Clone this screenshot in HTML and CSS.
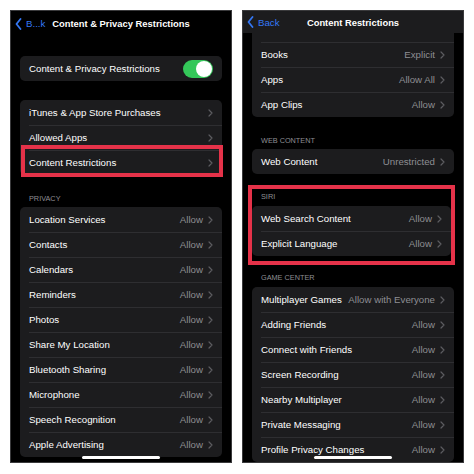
FILE: index.html
```html
<!DOCTYPE html>
<html lang="en">
<head>
  <meta charset="UTF-8">
  <meta name="viewport" content="width=device-width, initial-scale=1.0">
  <title>Content Restrictions</title>
  <link rel="stylesheet" href="styles.css">
</head>
<body>
  <div class="page">
    <!-- left screen -->
    <div class="phone">
      <div class="nav">
        <div class="back">
          <svg width="7" height="12" viewBox="0 0 7 12"><polyline points="5.5,1 1.5,6 5.5,11"/></svg>
          <span>B...k</span>
        </div>
        <div class="title">Content &amp; Privacy Restrictions</div>
        <div></div>
      </div>

      <div class="group first">
        <div class="row">
          <span class="label">Content &amp; Privacy Restrictions</span>
          <span class="toggle"><span class="knob"></span></span>
        </div>
      </div>

      <div class="group second">
        <div class="row"><span class="label">iTunes &amp; App Store Purchases</span><svg class="chev" width="5" height="8" viewBox="0 0 5 8"><polyline points="1,1 4,4 1,7"/></svg></div>
        <div class="row"><span class="label">Allowed Apps</span><svg class="chev" width="5" height="8" viewBox="0 0 5 8"><polyline points="1,1 4,4 1,7"/></svg></div>
        <div class="row marked"><span class="label">Content Restrictions</span><svg class="chev" width="5" height="8" viewBox="0 0 5 8"><polyline points="1,1 4,4 1,7"/></svg></div>
      </div>

      <div class="section-title">PRIVACY</div>
      <div class="group">
        <div class="row"><span class="label">Location Services</span><span class="value">Allow</span><svg class="chev" width="5" height="8" viewBox="0 0 5 8"><polyline points="1,1 4,4 1,7"/></svg></div>
        <div class="row"><span class="label">Contacts</span><span class="value">Allow</span><svg class="chev" width="5" height="8" viewBox="0 0 5 8"><polyline points="1,1 4,4 1,7"/></svg></div>
        <div class="row"><span class="label">Calendars</span><span class="value">Allow</span><svg class="chev" width="5" height="8" viewBox="0 0 5 8"><polyline points="1,1 4,4 1,7"/></svg></div>
        <div class="row"><span class="label">Reminders</span><span class="value">Allow</span><svg class="chev" width="5" height="8" viewBox="0 0 5 8"><polyline points="1,1 4,4 1,7"/></svg></div>
        <div class="row"><span class="label">Photos</span><span class="value">Allow</span><svg class="chev" width="5" height="8" viewBox="0 0 5 8"><polyline points="1,1 4,4 1,7"/></svg></div>
        <div class="row"><span class="label">Share My Location</span><span class="value">Allow</span><svg class="chev" width="5" height="8" viewBox="0 0 5 8"><polyline points="1,1 4,4 1,7"/></svg></div>
        <div class="row"><span class="label">Bluetooth Sharing</span><span class="value">Allow</span><svg class="chev" width="5" height="8" viewBox="0 0 5 8"><polyline points="1,1 4,4 1,7"/></svg></div>
        <div class="row"><span class="label">Microphone</span><span class="value">Allow</span><svg class="chev" width="5" height="8" viewBox="0 0 5 8"><polyline points="1,1 4,4 1,7"/></svg></div>
        <div class="row"><span class="label">Speech Recognition</span><span class="value">Allow</span><svg class="chev" width="5" height="8" viewBox="0 0 5 8"><polyline points="1,1 4,4 1,7"/></svg></div>
        <div class="row"><span class="label">Apple Advertising</span><span class="value">Allow</span><svg class="chev" width="5" height="8" viewBox="0 0 5 8"><polyline points="1,1 4,4 1,7"/></svg></div>
      </div>

      <div class="home-bar"></div>
    </div>

    <!-- right screen -->
    <div class="phone">
      <div class="nav solid">
        <div class="back">
          <svg width="7" height="12" viewBox="0 0 7 12"><polyline points="5.5,1 1.5,6 5.5,11"/></svg>
          <span>Back</span>
        </div>
        <div class="title">Content Restrictions</div>
        <div></div>
      </div>

      <div class="group scrolled">
        <div class="row cut"></div>
        <div class="row"><span class="label">Books</span><span class="value">Explicit</span><svg class="chev" width="5" height="8" viewBox="0 0 5 8"><polyline points="1,1 4,4 1,7"/></svg></div>
        <div class="row"><span class="label">Apps</span><span class="value">Allow All</span><svg class="chev" width="5" height="8" viewBox="0 0 5 8"><polyline points="1,1 4,4 1,7"/></svg></div>
        <div class="row"><span class="label">App Clips</span><span class="value">Allow</span><svg class="chev" width="5" height="8" viewBox="0 0 5 8"><polyline points="1,1 4,4 1,7"/></svg></div>
      </div>

      <div class="section-title">WEB CONTENT</div>
      <div class="group">
        <div class="row"><span class="label">Web Content</span><span class="value">Unrestricted</span><svg class="chev" width="5" height="8" viewBox="0 0 5 8"><polyline points="1,1 4,4 1,7"/></svg></div>
      </div>

      <div class="marked-box">
        <div class="section-title inside">SIRI</div>
        <div class="group">
          <div class="row"><span class="label">Web Search Content</span><span class="value">Allow</span><svg class="chev" width="5" height="8" viewBox="0 0 5 8"><polyline points="1,1 4,4 1,7"/></svg></div>
          <div class="row"><span class="label">Explicit Language</span><span class="value">Allow</span><svg class="chev" width="5" height="8" viewBox="0 0 5 8"><polyline points="1,1 4,4 1,7"/></svg></div>
        </div>
      </div>

      <div class="section-title after-box">GAME CENTER</div>
      <div class="group">
        <div class="row"><span class="label">Multiplayer Games</span><span class="value">Allow with Everyone</span><svg class="chev" width="5" height="8" viewBox="0 0 5 8"><polyline points="1,1 4,4 1,7"/></svg></div>
        <div class="row"><span class="label">Adding Friends</span><span class="value">Allow</span><svg class="chev" width="5" height="8" viewBox="0 0 5 8"><polyline points="1,1 4,4 1,7"/></svg></div>
        <div class="row"><span class="label">Connect with Friends</span><span class="value">Allow</span><svg class="chev" width="5" height="8" viewBox="0 0 5 8"><polyline points="1,1 4,4 1,7"/></svg></div>
        <div class="row"><span class="label">Screen Recording</span><span class="value">Allow</span><svg class="chev" width="5" height="8" viewBox="0 0 5 8"><polyline points="1,1 4,4 1,7"/></svg></div>
        <div class="row"><span class="label">Nearby Multiplayer</span><span class="value">Allow</span><svg class="chev" width="5" height="8" viewBox="0 0 5 8"><polyline points="1,1 4,4 1,7"/></svg></div>
        <div class="row"><span class="label">Private Messaging</span><span class="value">Allow</span><svg class="chev" width="5" height="8" viewBox="0 0 5 8"><polyline points="1,1 4,4 1,7"/></svg></div>
        <div class="row"><span class="label">Profile Privacy Changes</span><span class="value">Allow</span><svg class="chev" width="5" height="8" viewBox="0 0 5 8"><polyline points="1,1 4,4 1,7"/></svg></div>
      </div>

      <div class="home-bar"></div>
    </div>
  </div>
</body>
</html>
```

FILE: styles.css
```css
/* page */
body {
  margin: 0;
  background: #fff;
  font-family: 'Liberation Sans', Arial, sans-serif;
}

.page {
  display: flex;
  gap: 10px;
  padding: 10px;
}

.phone {
  position: relative;
  width: 220px;
  height: 451px;
  background: #000;
  border: 1px solid #3a3a3c;
  padding: 0 9px;
  box-sizing: content-box;
  margin: 0;
  overflow: hidden;
}

.phone {
  width: 202px;
}

/* navigation bar */
.nav {
  display: grid;
  grid-template-columns: 1fr auto 1fr;
  align-items: center;
  height: 25px;
  margin: 0 -9px;
  padding: 0 4px;
}

.nav.solid {
  height: 22px;
  background: #1c1c1e;
}

.back {
  display: flex;
  align-items: center;
  gap: 4px;
  color: #3478f6;
  font-size: 9.7px;
}

.back svg polyline {
  fill: none;
  stroke: #3478f6;
  stroke-width: 1.8;
  stroke-linecap: round;
  stroke-linejoin: round;
}

.title {
  color: #fff;
  font-weight: bold;
  font-size: 9.4px;
}

/* grouped lists */
.group {
  background: #1c1c1e;
  border-radius: 5px;
}

.group.first {
  margin-top: 20px;
}

.group.second {
  margin-top: 19px;
}

.group.scrolled {
  border-radius: 0 0 5px 5px;
}

.row {
  position: relative;
  display: flex;
  align-items: center;
  height: 25px;
  padding: 0 9px 0 9px;
  font-size: 9.7px;
  color: #fff;
}

.row.cut {
  height: 9px;
}

.row + .row::before {
  content: "";
  position: absolute;
  left: 9px;
  right: 0;
  top: 0;
  height: 1px;
  background: #2e2e31;
}

.label {
  flex: 1;
  white-space: nowrap;
}

.value {
  color: #8e8e93;
  white-space: nowrap;
}

.chev {
  margin-left: 5px;
}

.chev polyline {
  fill: none;
  stroke: #5c5c60;
  stroke-width: 1.2;
  stroke-linecap: round;
  stroke-linejoin: round;
}

/* switch */
.toggle {
  display: flex;
  justify-content: flex-end;
  align-items: center;
  width: 30px;
  height: 18px;
  padding: 0 1px;
  box-sizing: border-box;
  border-radius: 9px;
  background: #34c759;
}

.knob {
  width: 16px;
  height: 16px;
  border-radius: 50%;
  background: #fff;
}

/* section headers */
.section-title {
  padding: 18px 9px 2px;
  line-height: 12px;
  font-size: 7.3px;
  color: #8e8e93;
}

.section-title.inside {
  padding: 2px 9px 3px;
}

.section-title.after-box {
  padding: 7px 9px 3px;
}

/* red highlight marks */
.row.marked::after {
  content: "";
  position: absolute;
  top: -5px;
  bottom: -2px;
  left: 1px;
  right: -1px;
  border: 4px solid #e53249;
}

.marked-box {
  margin: 11px -1px 0 -4px;
  padding-bottom: 5px;
  border: 4px solid #e53249;
}

.home-bar {
  position: absolute;
  left: 50%;
  bottom: 3px;
  width: 78px;
  height: 3px;
  margin-left: -39px;
  border-radius: 2px;
  background: #fff;
}
```
